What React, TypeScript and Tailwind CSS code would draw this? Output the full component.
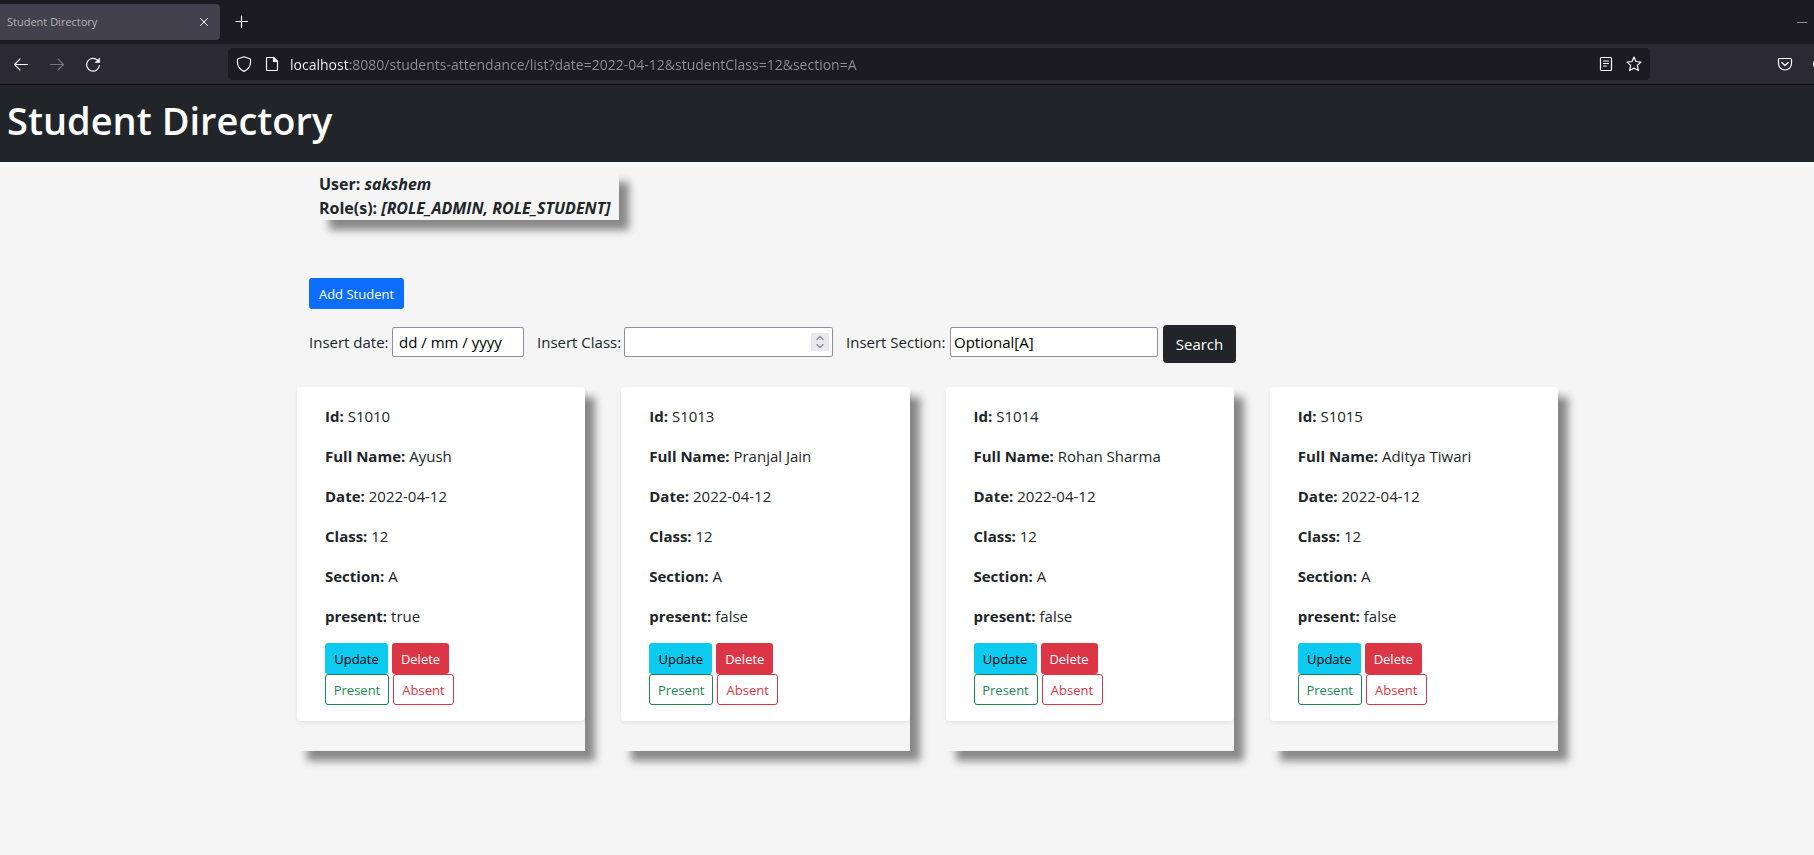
import { ReactNode } from "react";

const students = [
  { id: "S1010", name: "Ayush", date: "2022-04-12", studentClass: "12", section: "A", present: "true" },
  { id: "S1013", name: "Pranjal Jain", date: "2022-04-12", studentClass: "12", section: "A", present: "false" },
  { id: "S1014", name: "Rohan Sharma", date: "2022-04-12", studentClass: "12", section: "A", present: "false" },
  { id: "S1015", name: "Aditya Tiwari", date: "2022-04-12", studentClass: "12", section: "A", present: "false" },
];

function Icon({ children, className = "" }: { children: ReactNode; className?: string }) {
  return (
    <svg
      viewBox="0 0 16 16"
      fill="none"
      stroke="currentColor"
      strokeWidth="1.2"
      strokeLinecap="round"
      strokeLinejoin="round"
      className={`w-4 h-4 shrink-0 ${className}`}
      aria-hidden="true"
    >
      {children}
    </svg>
  );
}

function TabBar() {
  return (
    <div className="flex items-center h-11 bg-[#1c1b22] text-[#fbfbfe]">
      <div className="flex items-center justify-between w-[220px] h-9 pl-[7px] pr-2 rounded-r bg-[#42414d]">
        <span className="text-[11px] text-[#b4b3b9]">Student Directory</span>
        <button aria-label="Close tab">
          <Icon>
            <path d="M4.5 4.5l7 7M11.5 4.5l-7 7" strokeWidth="1" />
          </Icon>
        </button>
      </div>
      <button aria-label="New tab" className="ml-[14px]">
        <Icon>
          <path d="M7.5 2v11.500M2 7.500h11.500" />
        </Icon>
      </button>
      <button aria-label="Minimize" className="ml-auto mr-[7px] w-[10px] h-4 flex items-center">
        <span className="block w-full h-px bg-[#8f8f94]" />
      </button>
    </div>
  );
}

function Toolbar() {
  return (
    <div className="flex items-center h-[41px] pl-[13px] bg-[#2b2a33] text-[#fbfbfe] border-b border-[#0c0c0d] overflow-hidden">
      <div className="flex items-center gap-5 w-[215px] shrink-0">
        <button aria-label="Back">
          <Icon>
            <path d="M14.5 8.5h-13M7 3L1.5 8.5L7 14" />
          </Icon>
        </button>
        <button aria-label="Forward" className="text-[#77767c]">
          <Icon>
            <path d="M1.5 8.5h13M9 3l5.5 5.5L9 14" />
          </Icon>
        </button>
        <button aria-label="Reload">
          <Icon>
            <path d="M14.4 9.5A6.4 6.4 0 1 1 12.6 4.2" />
            <path d="M14.6 2.3v4.2h-4.2z" fill="currentColor" strokeWidth="0.6" />
          </Icon>
        </button>
      </div>
      <div className="flex items-center flex-1 h-8 px-2 rounded bg-[#1c1b22]">
        <Icon>
          <path d="M8 .8L14.5 3v3.6c0 4-2.4 7-6.5 8.8C3.9 13.6 1.5 10.6 1.5 6.6V3z" />
        </Icon>
        <Icon className="ml-3">
          <path d="M3.5 1.5h6l4 4v8a1 1 0 0 1-1 1h-9a1 1 0 0 1-1-1v-11a1 1 0 0 1 1-1z" />
          <path d="M9.5 1.5v4h4z" fill="currentColor" />
        </Icon>
        {/* host is bright, the rest of the url is dimmed */}
        <input
          aria-label="Address"
          defaultValue="localhost:8080/students-attendance/list?date=2022-04-12&studentClass=12&section=A"
          className="flex-1 min-w-0 ml-[10px] mt-px text-[14px] text-transparent bg-clip-text bg-[linear-gradient(90deg,#fbfbfe_60px,#8f8f94_60px)] outline-none"
        />
        <button aria-label="Reader view">
          <Icon>
            <rect x="2.5" y="1.5" width="11" height="13" rx="1" />
            <path d="M5.5 5h5M5.5 7.5h5M5.5 10h3" />
          </Icon>
        </button>
        <button aria-label="Bookmark" className="ml-3">
          <Icon>
            <path d="M8 1l2 4.500 5 .6-3.700 3.300 1.100 5.100L8 12.100l-4.400 2.400 1.100-5.100L1 6.100l5-.6z" />
          </Icon>
        </button>
      </div>
      <button aria-label="Save to Pocket" className="ml-[127px]">
        <Icon>
          <path d="M2.5 2.5h11a1 1 0 0 1 1 1V7.500a6.500 6.500 0 0 1-13 0V3.500a1 1 0 0 1 1-1z" />
          <path d="M4.800 6.500L8 9.500l3.200-3" />
        </Icon>
      </button>
      <span className="ml-5 -mr-[15px] w-4 h-4 shrink-0 rounded-full border border-[#fbfbfe]" />
    </div>
  );
}

function SearchForm() {
  const inputClass = "h-[30px] rounded-[2px] border border-[#8f8f9d] bg-white text-[15px] text-black outline-none";

  return (
    <form className="flex items-start pl-3 mt-4" onSubmit={(e) => e.preventDefault()}>
      <label htmlFor="date" className="w-[83px] mt-[5px] whitespace-nowrap">Insert date:</label>
      <input id="date" placeholder="dd / mm / yyyy" className={`${inputClass} w-[132px] mt-[2px] px-[6px] placeholder:text-black`} />
      <label htmlFor="class" className="w-[87px] ml-[13px] mt-[5px] whitespace-nowrap">Insert Class:</label>
      <div className={`${inputClass} flex items-center w-[209px] mt-[2px] pr-[3px]`}>
        <input
          id="class"
          type="number"
          className="flex-1 min-w-0 pl-[3px] outline-none [appearance:textfield]"
        />
        <button type="button" aria-label="Change class" className="w-[18px] h-[18px] flex items-center justify-center bg-[#e9e9ed] text-[#8f8f9d]">
          <Icon>
            <path d="M5 5.5l3-3 3 3M5 10.5l3 3 3-3" strokeWidth="1.5" />
          </Icon>
        </button>
      </div>
      <label htmlFor="section" className="w-[104px] ml-[13px] mt-[5px] whitespace-nowrap">Insert Section:</label>
      <input id="section" defaultValue="Optional[A]" className={`${inputClass} w-[208px] mt-[2px] px-[3px]`} />
      <button className="w-[73px] h-[38px] ml-[5px] rounded bg-[#212529] text-white">Search</button>
    </form>
  );
}

function Field({ label, value }: { label: string; value: string }) {
  return (
    <p>
      <b>{label}:</b> {value}
    </p>
  );
}

function StudentCard({ student }: { student: (typeof students)[number] }) {
  return (
    <div className="pb-[30px] bg-[#f5f5f5] shadow-[10px_10px_8px_#888888]">
      <div className="pt-[17px] pb-4 px-7 rounded bg-white shadow-[0_2px_4px_rgba(0,0,0,0.075)]">
        <div className="flex flex-col gap-4">
          <Field label="Id" value={student.id} />
          <Field label="Full Name" value={student.name} />
          <Field label="Date" value={student.date} />
          <Field label="Class" value={student.studentClass} />
          <Field label="Section" value={student.section} />
          <Field label="present" value={student.present} />
        </div>
        <div className="flex gap-1 mt-[15px] text-[13px]">
          <button className="w-[63px] h-[31px] rounded-[3px] bg-[#0dcaf0] text-black">Update</button>
          <button className="w-[57px] h-[31px] rounded-[3px] bg-[#dc3545] text-white">Delete</button>
        </div>
        <div className="flex gap-1 text-[13px]">
          <button className="w-16 h-[31px] rounded-[3px] border border-[#198754] text-[#198754]">Present</button>
          <button className="w-[61px] h-[31px] rounded-[3px] border border-[#dc3545] text-[#dc3545]">Absent</button>
        </div>
      </div>
    </div>
  );
}

export default function App() {
  return (
    <div className="min-h-screen bg-[#f5f5f5] font-['Open_Sans','Noto_Sans',sans-serif] text-[15px] leading-6 text-[#212529]">
      <TabBar />
      <Toolbar />
      <header className="h-[77px] px-[7px] bg-[#212529]">
        <h1 className="pt-[11px] text-[38px] leading-[48px] font-semibold text-white">Student Directory</h1>
      </header>
      <main className="pt-[10px] pl-[297px] pr-[256px]">
        <div className="w-[300px] ml-[22px] text-base font-bold whitespace-nowrap bg-[#f5f5f5] shadow-[10px_10px_8px_#888888]">
          <div>User: <i>sakshem</i></div>
          <div>Role(s): <i>[ROLE_ADMIN, ROLE_STUDENT]</i></div>
        </div>
        <button className="block w-[95px] h-[31px] ml-3 mt-[58px] rounded-[3px] bg-[#0d6efd] text-[13px] text-white">
          Add Student
        </button>
        <SearchForm />
        <div className="grid grid-cols-4 gap-9 mt-6">
          {students.map((student) => (
            <StudentCard key={student.id} student={student} />
          ))}
        </div>
      </main>
    </div>
  );
}
